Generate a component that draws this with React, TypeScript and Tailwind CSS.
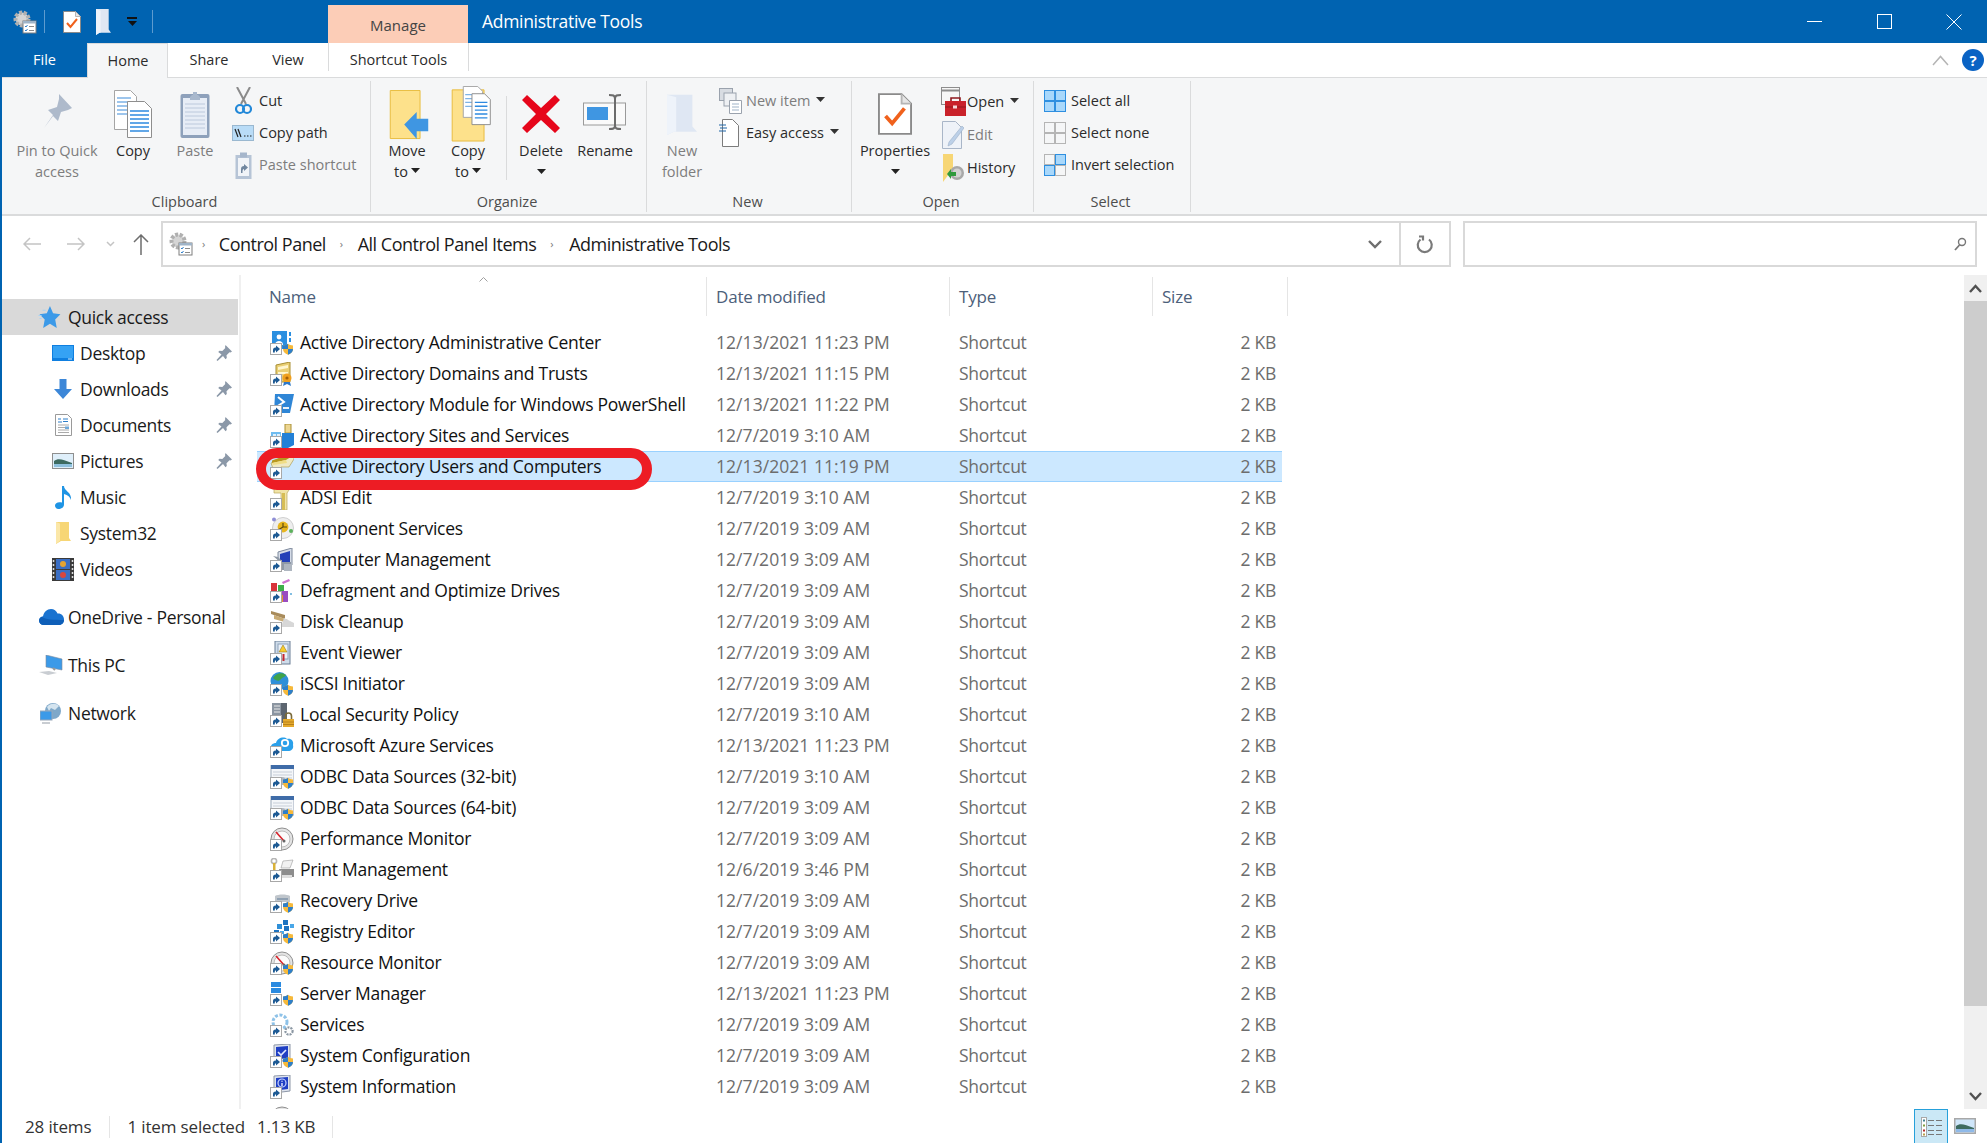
import type { ReactNode } from 'react';

// shortcut arrow badge used on every row icon
const Arrow = (
  <g>
    <rect x="0.5" y="12.5" width="11" height="11" fill="#fff" stroke="#a8a8a8" />
    <path d="M3 21.500v-2.500q0-2.500 2.500-2.500h.5v-2l4 3.500-4 3.500v-2h-.5q-.7 0-.7 1v1z" fill="#1d5a94" />
  </g>
);

const Shield = (
  <g>
    <path d="M13 14.5c2 0 3.7-.6 5-1.7 1.3 1.1 3 1.7 5 1.7v3.5c0 2.8-2 4.7-5 5.8-3-1.1-5-3-5-5.8z" fill="#f6b93b" />
    <path d="M18 12.8v5.2h-5v-3.5c2 0 3.7-.6 5-1.7zM18 18h5c0 2.8-2 4.7-5 5.8z" fill="#2e7fc9" />
  </g>
);

const Gauge = (
  <g>
    <circle cx="12" cy="12" r="11" fill="#e4e4e4" stroke="#8f8f8f" />
    <circle cx="12" cy="12" r="8" fill="#fbfbfb" stroke="#bbb" />
    <path d="M6 5l8 9" stroke="#d8222a" strokeWidth="1.6" />
    <circle cx="14" cy="14" r="1.5" fill="#666" />
  </g>
);

const Monitor = (
  <g>
    <path d="M4 1l16-1v16l-16 2z" fill="#dfe4ee" stroke="#8d97a8" />
    <path d="M6 3l12-1v12l-12 1.5z" fill="#1f3fc4" />
  </g>
);

const rowIcons: Record<string, ReactNode> = {
  adac: (
    <>
      <rect x="2" y="0" width="15" height="18" fill="#2b8fe0" />
      <circle cx="9" cy="6" r="2.4" fill="#fff" />
      <path d="M5 14c0-3 2-4 4-4s4 1 4 4z" fill="#fff" />
      <rect x="19" y="1" width="2" height="4" fill="#2b8fe0" />
      <rect x="19" y="7" width="2" height="4" fill="#2b8fe0" />
      {Shield}
    </>
  ),
  addt: (
    <>
      <path d="M6 3l14-3v20h-14z" fill="#e9cf74" stroke="#a98f35" />
      <path d="M8 5l10-2v3l-10 2zM8 10h10v2h-10z" fill="#fff6cf" />
      <circle cx="17" cy="16" r="4.5" fill="#f0a01e" />
      <circle cx="17" cy="16" r="1.6" fill="#a35f06" />
      <path d="M14 20l-1 4 4-2 4 2-1-4z" fill="#2d78c8" />
    </>
  ),
  admps: (
    <>
      <path d="M5 1h19l-4 19h-16z" fill="#2f86d6" />
      <path d="M8 4l6 5-8 5" fill="none" stroke="#fff" strokeWidth="2" />
      <path d="M13 15h6" stroke="#fff" strokeWidth="1.8" />
    </>
  ),
  adss: (
    <>
      <rect x="15" y="0" width="6" height="9" fill="#ecd591" stroke="#a98f35" />
      <path d="M1 8h10v8h-10z" fill="#6fbcf0" />
      <path d="M12 9h12v12l-6 3h-6z" fill="#2280d6" />
      <path d="M3 10h3v3h-3zM7 10h3v3h-3z" fill="#dff1fd" />
    </>
  ),
  aduc: (
    <>
      <path d="M1 8l17-8h6v4l-5 8h-8v10h-5z" fill="#efe9c4" stroke="#a8923c" strokeWidth="0.6" />
      <path d="M2 5.500l15-5.500h7l-8 5-14 3z" fill="#b8981e" />
      <path d="M2 8l14-3 1 3-14 2z" fill="#f0dd86" />
    </>
  ),
  adsi: (
    <>
      <path d="M4 1h17l-4 6v17h-6v-17h-7z" fill="#f1e4a7" stroke="#b7a75a" strokeWidth="0.7" />
      <path d="M12 7h3v17h-3z" fill="#d6bd55" />
    </>
  ),
  comp: (
    <>
      <circle cx="13" cy="11" r="10.5" fill="#eeeeee" stroke="#cfcfcf" />
      <circle cx="4" cy="2.5" r="2" fill="#8f8fd6" />
      <circle cx="21" cy="14" r="2" fill="#5bb15b" />
      <circle cx="13" cy="10" r="5.4" fill="#e7b51e" />
      <path d="M13 6v4h4M13 10l-5 3" stroke="#5b4a10" strokeWidth="1.2" fill="none" />
    </>
  ),
  cmgt: (
    <>
      <path d="M8 4l14-4v17l-14 1z" fill="#d5dce8" stroke="#7e8a9c" />
      <path d="M10 6l10-3v12l-10 1z" fill="#2340b8" />
      <path d="M3 8l5 1 3 3-2 1zM9 14h12v8h-12z" fill="#8f99a6" />
      <rect x="14" y="16" width="8" height="7" fill="#aeb6c0" />
    </>
  ),
  defrag: (
    <>
      <rect x="1" y="4" width="6" height="8" fill="#d8333a" />
      <rect x="8" y="6" width="6" height="9" fill="#3fae4a" />
      <path d="M12 3l7-3 1 2-7 3z" fill="#cf6fd0" />
      <rect x="12" y="12" width="6" height="11" fill="#9a4dc0" />
      <rect x="8" y="16" width="5" height="7" fill="#e79b2a" />
      <circle cx="21" cy="15" r="1" fill="#58a8d8" />
    </>
  ),
  disk: (
    <>
      <path d="M1 1l14 4 0 4-14-5z" fill="#a98c5c" />
      <path d="M4 5l14 5v3l-14-4z" fill="#c9ac76" />
      <path d="M14 8l10 5v4h-13z" fill="#d7d7d7" />
    </>
  ),
  event: (
    <>
      <rect x="5" y="0" width="15" height="23" fill="#cfdcea" stroke="#6b7f96" />
      <rect x="8" y="3" width="10" height="15" fill="#eaf1f8" stroke="#8da2ba" />
      <path d="M13 4l4 7h-8z" fill="#f7cb2d" stroke="#8a6c0a" strokeWidth="0.5" />
      <rect x="12.5" y="13" width="2" height="7" fill="#c6282e" />
    </>
  ),
  iscsi: (
    <>
      <circle cx="9.5" cy="9" r="9" fill="#2f8fd8" />
      <path d="M3 6c3-5 9-6 13-3-1 2-3 2-5 4-2 3-5 2-8-1z" fill="#3fa34a" />
      {Shield}
    </>
  ),
  lsp: (
    <>
      <rect x="2" y="0" width="15" height="20" fill="#8b95a1" />
      <rect x="11" y="0" width="6" height="20" fill="#5c6570" />
      <path d="M4 3h6M4 6h6M4 9h6" stroke="#e8e8e8" strokeWidth="1.2" />
      <rect x="13" y="16" width="11" height="8" fill="#e4a92c" />
      <path d="M15.5 16v-3a3 3 0 016 0v3" fill="none" stroke="#7a6a3a" strokeWidth="1.6" />
      <path d="M13 19h11M13 21.5h11" stroke="#b8811a" />
    </>
  ),
  azure: (
    <>
      <path d="M1 15c-1-4 2-6 5-6 1-5 8-7 11-4 4-1 7 2 6 6 1 4-2 6-5 6h-14c-1 0-2-1-3-2z" fill="#2aa0ea" />
      <circle cx="15" cy="9" r="3.2" fill="none" stroke="#fff" strokeWidth="1.8" />
    </>
  ),
  odbc: (
    <>
      <rect x="1" y="0" width="23" height="19" fill="#f4f6f9" stroke="#9aa7b8" />
      <rect x="1" y="0" width="23" height="4" fill="#3f6ca8" />
      <path d="M3 7h19M3 10h19M3 13h19" stroke="#c7ced8" />
      <circle cx="12" cy="16" r="4" fill="#b1b8c2" />
      {Shield}
    </>
  ),
  perf: Gauge,
  print: (
    <>
      <circle cx="4" cy="3" r="2.6" fill="none" stroke="#b6b6b6" strokeWidth="1.6" />
      <rect x="3" y="5" width="2.5" height="7" fill="#d9b23a" />
      <path d="M13 3l10-1-3 8h-9z" fill="#f1f1f1" stroke="#9a9a9a" strokeWidth="0.6" />
      <path d="M9 11h15v8h-13z" fill="#8d8d8d" />
      <path d="M12 17h10v3h-10z" fill="#dedede" />
    </>
  ),
  recov: (
    <>
      <path d="M5 7c3-2 12-2 15 0v6h-15z" fill="#c0c6cc" />
      <path d="M7 9h11v2h-11z" fill="#8fa0b2" />
      {Shield}
    </>
  ),
  regedit: (
    <>
      <rect x="13" y="0" width="5" height="5" fill="#1e73c0" />
      <rect x="7" y="4" width="5" height="5" fill="#2f8fd8" />
      <rect x="14" y="6" width="5" height="5" fill="#1e73c0" />
      <rect x="20" y="4" width="4" height="4" fill="#4aa7e8" />
      <rect x="4" y="10" width="5" height="4" fill="#1e73c0" />
      <rect x="10" y="11" width="4" height="3" fill="#4aa7e8" />
      {Shield}
    </>
  ),
  resmon: (
    <>
      {Gauge}
      {Shield}
    </>
  ),
  server: (
    <>
      <rect x="1" y="0" width="10" height="5" fill="#2a8ae0" />
      <rect x="1" y="6" width="10" height="5" fill="#2a8ae0" />
      {Shield}
    </>
  ),
  services: (
    <>
      <circle cx="10" cy="9" r="7" fill="#fff" stroke="#8ec2e8" strokeWidth="3" strokeDasharray="3 1.6" />
      <circle cx="19" cy="18" r="3.6" fill="#fff" stroke="#8b97a3" strokeWidth="2.2" strokeDasharray="2 1" />
    </>
  ),
  msconfig: (
    <>
      {Monitor}
      <path d="M8 8l3 3 5-5" stroke="#dfe8ff" strokeWidth="1.6" fill="none" />
      {Shield}
    </>
  ),
  msinfo: (
    <>
      {Monitor}
      <circle cx="12" cy="8" r="4" fill="none" stroke="#c9d4ff" strokeWidth="1.2" />
      <path d="M12 5.8v1M12 8v3" stroke="#e8edff" strokeWidth="1.4" />
    </>
  ),
  task: Gauge,
};

type FileRow = { name: string; date: string; icon: string };

const files: FileRow[] = [
  { name: 'Active Directory Administrative Center', date: '12/13/2021 11:23 PM', icon: 'adac' },
  { name: 'Active Directory Domains and Trusts', date: '12/13/2021 11:15 PM', icon: 'addt' },
  { name: 'Active Directory Module for Windows PowerShell', date: '12/13/2021 11:22 PM', icon: 'admps' },
  { name: 'Active Directory Sites and Services', date: '12/7/2019 3:10 AM', icon: 'adss' },
  { name: 'Active Directory Users and Computers', date: '12/13/2021 11:19 PM', icon: 'aduc' },
  { name: 'ADSI Edit', date: '12/7/2019 3:10 AM', icon: 'adsi' },
  { name: 'Component Services', date: '12/7/2019 3:09 AM', icon: 'comp' },
  { name: 'Computer Management', date: '12/7/2019 3:09 AM', icon: 'cmgt' },
  { name: 'Defragment and Optimize Drives', date: '12/7/2019 3:09 AM', icon: 'defrag' },
  { name: 'Disk Cleanup', date: '12/7/2019 3:09 AM', icon: 'disk' },
  { name: 'Event Viewer', date: '12/7/2019 3:09 AM', icon: 'event' },
  { name: 'iSCSI Initiator', date: '12/7/2019 3:09 AM', icon: 'iscsi' },
  { name: 'Local Security Policy', date: '12/7/2019 3:10 AM', icon: 'lsp' },
  { name: 'Microsoft Azure Services', date: '12/13/2021 11:23 PM', icon: 'azure' },
  { name: 'ODBC Data Sources (32-bit)', date: '12/7/2019 3:10 AM', icon: 'odbc' },
  { name: 'ODBC Data Sources (64-bit)', date: '12/7/2019 3:09 AM', icon: 'odbc' },
  { name: 'Performance Monitor', date: '12/7/2019 3:09 AM', icon: 'perf' },
  { name: 'Print Management', date: '12/6/2019 3:46 PM', icon: 'print' },
  { name: 'Recovery Drive', date: '12/7/2019 3:09 AM', icon: 'recov' },
  { name: 'Registry Editor', date: '12/7/2019 3:09 AM', icon: 'regedit' },
  { name: 'Resource Monitor', date: '12/7/2019 3:09 AM', icon: 'resmon' },
  { name: 'Server Manager', date: '12/13/2021 11:23 PM', icon: 'server' },
  { name: 'Services', date: '12/7/2019 3:09 AM', icon: 'services' },
  { name: 'System Configuration', date: '12/7/2019 3:09 AM', icon: 'msconfig' },
  { name: 'System Information', date: '12/7/2019 3:09 AM', icon: 'msinfo' },
];

const GearDoc = () => (
  <svg width="24" height="24" viewBox="0 0 24 24">
    <circle cx="9" cy="9" r="6.500" fill="#d5d5d5" stroke="#b0b0b0" strokeWidth="4" strokeDasharray="3 1.5" />
    <rect x="10" y="11" width="13" height="12" fill="#fff" stroke="#7f7f7f" />
    <rect x="10" y="11" width="13" height="2.5" fill="#9fb4c8" />
    <path d="M12 16l1 1 1.5-2M12 20l1 1 1.5-2" stroke="#2f7fc9" fill="none" />
    <path d="M16 16.5h5M16 20.5h5" stroke="#8a8a8a" />
  </svg>
);

const PropsDoc = ({ w = 18, h = 22 }: { w?: number; h?: number }) => (
  <svg width={w} height={h} viewBox="0 0 18 22">
    <path d="M.5.5h12l5 5v16h-17z" fill="#fff" stroke="#8a8a8a" />
    <path d="M12.5.5v5h5" fill="#e6e6e6" stroke="#b5b5b5" />
    <path d="M4 12l3.5 4 6.5-8" stroke="#f0611c" strokeWidth="2" fill="none" />
  </svg>
);

const FadedFolder = ({ w = 15, h = 27 }: { w?: number; h?: number }) => (
  <svg width={w} height={h} viewBox="0 0 26 50" preserveAspectRatio="none">
    <path d="M0 2h22v38l4 6h-20l-6 4z" fill="#dfe7f3" />
    <path d="M0 2l8 3v41l-2 0-6 4z" fill="#eef3fa" />
  </svg>
);

const PinLarge = () => (
  <svg width="31" height="38" viewBox="0 0 31 38" className="mb-[4px]">
    <path d="M17 1l13 14-4 2-7 2-3 9-5-5-9 12 9-13-5-5 9-3 2-8z" fill="#aebacb" />
  </svg>
);

const CopyDocs = () => (
  <svg width="38" height="48" viewBox="0 0 38 48">
    <path d="M.5.5h16l6 6v33h-22z" fill="#fff" stroke="#a5a5a5" />
    <path d="M3 8h14M3 12h14M3 16h14M3 20h14M3 24h14" stroke="#7eb3e6" strokeWidth="1.5" />
    <path d="M13.5 11.5h17l7 7v29h-24z" fill="#fff" stroke="#8e8e8e" />
    <path d="M16 21h19M16 25h19M16 29h19M16 33h19M16 37h19M16 41h19" stroke="#2f8ae0" strokeWidth="1.5" />
  </svg>
);

const Clipboard = () => (
  <svg width="30" height="48" viewBox="0 0 30 48">
    <rect x="0.5" y="4" width="29" height="44" rx="2" fill="#8ea1bb" />
    <rect x="3" y="8" width="24" height="37" fill="#e7edf6" />
    <path d="M5 14h20M5 18h20M5 22h20M5 26h20M5 30h20M5 34h20M5 38h20" stroke="#bcc9dc" />
    <path d="M10 7l2-2h1v-3h4v3h1l2 2v3h-10z" fill="#a8b8cd" />
  </svg>
);

const Scissors = () => (
  <svg width="17" height="28" viewBox="0 0 17 28">
    <path d="M2 0l9 17M15 0l-9 17" stroke="#8b8b8b" strokeWidth="2" />
    <circle cx="5" cy="22" r="4" fill="none" stroke="#2288d8" strokeWidth="2.2" />
    <circle cx="12" cy="22" r="4" fill="none" stroke="#2288d8" strokeWidth="2.2" />
  </svg>
);

const CopyPathIcon = () => (
  <svg width="22" height="16" viewBox="0 0 22 16">
    <rect x="0.5" y="0.5" width="21" height="15" fill="#b9dcf7" stroke="#9ab8d0" />
    <path d="M3 4l3 8M6 4l3 8" stroke="#222" strokeWidth="1.2" />
    <path d="M12 11h1.5M15 11h1.5M18 11h1.5" stroke="#222" strokeWidth="1.2" />
  </svg>
);

const PasteShortcutIcon = () => (
  <svg width="17" height="27" viewBox="0 0 17 27">
    <rect x="0.5" y="3" width="16" height="24" fill="#b6c4d6" />
    <rect x="3" y="6" width="11" height="18" fill="#f1f4f8" />
    <rect x="5" y="0.5" width="7" height="5" fill="#a6b6cb" />
    <path d="M6 21v-4c0-2 1-3 3-3v-2l4 3.500-4 3.500v-2c-1 0-1.500 1-1.500 2.500v1.500z" fill="#70869f" />
  </svg>
);

const MoveToIcon = () => (
  <svg width="40" height="50" viewBox="0 0 40 52" className="ml-[4px] mt-[2px]">
    <path d="M.5.5h31v50h-31z" fill="#fde18b" stroke="#e8bb3c" />
    <path d="M15 36l13-13v7h12v13h-12v8z" fill="#3f96e2" />
  </svg>
);

const CopyToIcon = () => (
  <svg width="44" height="56" viewBox="0 0 40 58" className="ml-[6px]">
    <path d="M.5 4h33v53h-33z" fill="#fde18b" stroke="#e8bb3c" />
    <path d="M12 .5h15l5 5v27h-20z" fill="#fff" stroke="#a5a5a5" />
    <path d="M14 9h15M14 13h15M14 17h15M14 21h15" stroke="#7eb3e6" strokeWidth="1.3" />
    <path d="M21 8h13l6 6v26h-19z" fill="#fff" stroke="#8e8e8e" />
    <path d="M24 17h13M24 21h13M24 25h13M24 29h13M24 33h13" stroke="#2f8ae0" strokeWidth="1.4" />
  </svg>
);

const DeleteIcon = () => (
  <svg width="38" height="38" viewBox="0 0 38 38">
    <path d="M5 0l14 13 14-13 5 5-14 14 14 14-5 5-14-13-14 13-5-5 14-14-14-14z" fill="#e6061b" />
  </svg>
);

const RenameIcon = () => (
  <svg width="44" height="44" viewBox="0 0 44 40" className="mb-[2px]">
    <rect x="0.5" y="10" width="42" height="22" fill="#fafafa" stroke="#9a9a9a" />
    <rect x="4" y="14" width="21" height="13" fill="#3f96e2" />
    <path d="M26 2c4 0 6 0 6 4v26c0 4 2 4 6 4M38 2c-4 0-6 0-6 4M32 32c0 4-2 4-6 4" fill="none" stroke="#6c6c6c" strokeWidth="2" />
  </svg>
);

const NewItemIcon = () => (
  <svg width="23" height="26" viewBox="0 0 23 26">
    <rect x="0.5" y="0.5" width="13" height="12" fill="#d8dce2" stroke="#9aa2ad" />
    <rect x="5" y="5" width="12" height="13" fill="#eef0f3" stroke="#9aa2ad" />
    <path d="M10.500 12.500h12v13h-12z" fill="#fff" stroke="#9aa2ad" />
    <path d="M13 16h7M13 19h7M13 22h7" stroke="#9fb3c8" />
  </svg>
);

const EasyAccessIcon = () => (
  <svg width="20" height="28" viewBox="0 0 20 28">
    <path d="M3.500.500h10l6 6v21h-16z" fill="#fff" stroke="#7c7c7c" />
    <path d="M0 6h7M1 9h7M0 12h7" stroke="#2067a8" strokeWidth="1.2" />
  </svg>
);

const ToolboxIcon = () => (
  <svg width="25" height="30" viewBox="0 0 25 30">
    <rect x="0.5" y="0.500" width="18" height="17" fill="#f7f7f7" stroke="#8d8d8d" />
    <path d="M1 3.500h17" stroke="#8d8d8d" strokeWidth="2" />
    <rect x="4" y="14" width="21" height="15" fill="#c9222a" />
    <path d="M10 14v-3h9v3" fill="none" stroke="#8f1a1f" strokeWidth="1.6" />
    <path d="M4 20h21" stroke="#8f1a1f" />
    <rect x="12" y="18.500" width="4" height="3" fill="#f5d9d9" />
  </svg>
);

const EditIcon = () => (
  <svg width="22" height="28" viewBox="0 0 22 28">
    <path d="M.5.500h13l6 6v21h-19z" fill="#eef2f8" stroke="#a9b6c8" />
    <path d="M20 5l2 2-12 16-4 2 1-4z" fill="#bcd0e8" stroke="#9cb0c8" strokeWidth="0.6" />
  </svg>
);

const HistoryIcon = () => (
  <svg width="21" height="29" viewBox="0 0 21 29">
    <path d="M0 1h10v20h-4l-6 8z" fill="#f7d675" />
    <circle cx="14" cy="20" r="7" fill="#a8a8a8" />
    <circle cx="14" cy="20" r="4.500" fill="#d2d2d2" />
    <path d="M4 21l4-5v3h5v4h-5v3z" fill="#2f9a3d" />
  </svg>
);

const Grid = ({ on }: { on: boolean[] }) => (
  <svg width="22" height="22" viewBox="0 0 22 22">
    {on.map((v, i) => (
      <rect
        key={i}
        x={i % 2 === 0 ? 0.5 : 11.5}
        y={i < 2 ? 0.5 : 11.5}
        width="10"
        height="10"
        fill={v ? '#a9d8fb' : '#f5f6f7'}
        stroke={v ? '#2e8fe0' : '#b5b5b5'}
      />
    ))}
  </svg>
);

const Caret = ({ className = '' }: { className?: string }) => (
  <svg width="9" height="5" viewBox="0 0 9 5" className={className}>
    <path d="M0 0h9l-4.500 5z" fill="currentColor" />
  </svg>
);

const SmallPin = () => (
  <svg width="16" height="16" viewBox="0 0 16 16">
    <path d="M9.500 0l6.500 6.500-1.500 1-1-.3-3 3 .3 2.800-1.300 1.300-2.500-3.300-5.500 5-1-1 5-5.500-3.300-2.500 1.300-1.300 2.800.3 3-3-.3-1z" fill="#8b98a8" />
  </svg>
);

function BigButton({
  width,
  icon,
  lines,
  caret,
  muted,
  twoRowCaret,
}: {
  width: string;
  icon: ReactNode;
  lines: string[];
  caret?: boolean;
  muted?: boolean;
  twoRowCaret?: boolean;
}) {
  return (
    <div className={`flex flex-col items-center pt-[4px] text-[14.5px] leading-[21px] ${width} ${muted ? 'text-[#7d7d7d]' : 'text-[#2b2b2b]'}`}>
      <div className="flex h-[52px] items-center justify-center">{icon}</div>
      {lines.map((line, i) => (
        <div key={line} className="flex items-center gap-[3px] whitespace-nowrap">
          {line}
          {caret && i === lines.length - 1 && !twoRowCaret && <Caret className="mb-[3px] text-[#222]" />}
        </div>
      ))}
      {twoRowCaret && <Caret className="mt-[8px] text-[#222]" />}
    </div>
  );
}

function SmallButton({
  icon,
  label,
  muted,
  caret,
  iconBox,
  height = 'h-[32px]',
}: {
  icon: ReactNode;
  label: string;
  muted?: boolean;
  caret?: boolean;
  iconBox: string;
  height?: string;
}) {
  return (
    <div className={`flex items-center whitespace-nowrap text-[14.5px] ${height} ${muted ? 'text-[#7d7d7d]' : 'text-[#2b2b2b]'}`}>
      <div className={`flex shrink-0 items-center ${iconBox}`}>{icon}</div>
      {label}
      {caret && <Caret className="ml-[6px] mb-[3px] text-[#333]" />}
    </div>
  );
}

function RibbonGroup({ width, label, pad, children }: { width: string; label: string; pad: string; children: ReactNode }) {
  return (
    <div className={`flex h-[131px] shrink-0 flex-col border-r border-[#dadbdc] pt-[3px] ${width}`}>
      <div className={`flex h-[104px] shrink-0 ${pad}`}>{children}</div>
      <div className="flex h-[24px] shrink-0 items-end justify-center pr-[3px] text-[14.5px] leading-[21px] text-[#4d4d4d]">{label}</div>
    </div>
  );
}

const sideIcons: Record<string, ReactNode> = {
  star: (
    <svg width="26" height="23" viewBox="3 0 24 22">
      <path d="M14 0l3 7 7 1-5 5 1.500 8-6.500-4-6.500 4 1.500-8-5-5 7-1z" fill="#3c9ae8" />
      <path d="M3 9h3M4 12h2M7 4h3" stroke="#a9d3f4" />
    </svg>
  ),
  desktop: (
    <svg width="22" height="16" viewBox="0 0 22 16">
      <rect width="22" height="16" fill="#0f7fe0" />
      <rect x="1" y="1" width="20" height="12" fill="#35a2f4" />
      <rect x="16" y="13.500" width="4" height="1" fill="#cfe9fc" />
    </svg>
  ),
  download: (
    <svg width="18" height="20" viewBox="0 0 18 20">
      <path d="M5.500 0h7v10h5.500l-9 10-9-10h5.500z" fill="#3c87d8" />
    </svg>
  ),
  docs: (
    <svg width="17" height="22" viewBox="0 0 17 22">
      <path d="M.5.500h12l4 4v17h-16z" fill="#fff" stroke="#9a9a9a" />
      <path d="M3 5h3M8 5h5M8 7.500h5M3 8h4" stroke="#2f7fc9" />
      <path d="M3 11h11M3 13.500h7M3 16h11M3 18.500h11" stroke="#aaa" />
      <rect x="10" y="12.500" width="4" height="2.500" fill="#6fa8d8" />
    </svg>
  ),
  pics: (
    <svg width="22" height="16" viewBox="0 0 22 16">
      <rect x="0.500" y="0.500" width="21" height="15" fill="#dfeffa" stroke="#8f8f8f" />
      <path d="M2 8c4-3 8-2 18 2v4h-18z" fill="#3d6b61" />
      <path d="M2 11h18v3h-18z" fill="#8fc1de" />
    </svg>
  ),
  music: (
    <svg width="17" height="23" viewBox="0 0 17 23">
      <path d="M7 0h2c0 5 8 6 7 14-1-3-3-5-7-6v10.500c0 3-3 4.500-5.500 4.500s-3.500-2-3.500-3.500c0-2.500 3-4 7-3z" fill="#1f94e4" />
    </svg>
  ),
  folder: (
    <svg width="15" height="22" viewBox="0 0 15 22">
      <path d="M0 0h13v16l2 3h-10l-5 3z" fill="#f7d675" />
      <path d="M0 0l4 1.500v17l-4 3.500z" fill="#fbe7a8" />
    </svg>
  ),
  film: (
    <svg width="22" height="23" viewBox="0 0 22 23">
      <rect width="22" height="23" fill="#3a3a3a" />
      <rect x="4" y="1" width="14" height="10" fill="#3a6ec4" />
      <rect x="4" y="12" width="14" height="10" fill="#3a6ec4" />
      <circle cx="11" cy="6" r="3" fill="#e5a332" />
      <circle cx="11" cy="17" r="3" fill="#d8473f" />
      <path d="M1.500 2v19M20.500 2v19" stroke="#ddd" strokeWidth="1.500" strokeDasharray="2 2" />
    </svg>
  ),
  cloud: (
    <svg width="25" height="16" viewBox="0 0 25 16">
      <path d="M5 16c-3 0-5-2-5-4.500s2-4 4-4.200c1-4.300 4-7.300 8-7.300 3 0 5.500 1.800 6.500 4.500 4-.3 6.500 2.500 6.500 6 0 3.200-2 5.500-5 5.500z" fill="#1a73d0" />
      <path d="M5 16c-3 0-5-2-5-4.500 0-1.500 1-3 3-3.800 3 3 12 3 22 3.300 0 2.500-2 5-5 5z" fill="#0f5fb8" />
    </svg>
  ),
  pc: (
    <svg width="24" height="20" viewBox="0 0 24 20">
      <path d="M7 0l16 4v11l-16-3z" fill="#3c9ae8" stroke="#7e8a9c" strokeWidth="0.6" />
      <path d="M14 13l2 2" stroke="#999" strokeWidth="2" />
      <path d="M0 17l10-1 8 2-9 2z" fill="#c9cdd2" />
    </svg>
  ),
  network: (
    <svg width="22" height="21" viewBox="0 0 22 21">
      <circle cx="13" cy="8" r="8" fill="#7fa8c9" />
      <path d="M7 4c3-4 9-4 12-1l-4 4-4-2-2 3z" fill="#d4e4ef" />
      <rect x="0" y="8" width="12" height="9" fill="#3c9ae8" stroke="#9aa7b8" />
      <path d="M2 19h8v2h-8z" fill="#c9cdd2" />
    </svg>
  ),
};

function NavRow({ icon, label, pin, indent, active }: { icon: string; label: string; pin?: boolean; indent?: boolean; active?: boolean }) {
  return (
    <div className={`flex h-[36px] items-center ${active ? 'bg-[#d9d9d9]' : ''} ${indent ? 'pl-[47px]' : 'pl-[35px]'}`}>
      <div className="mr-[3px] flex w-[28px] shrink-0 items-center justify-center">{sideIcons[icon]}</div>
      <span className="whitespace-nowrap text-[17.500px] tracking-[-0.3px] text-[#1a1a1a]">{label}</span>
      {pin && (
        <div className="ml-auto mr-[6px] flex">
          <SmallPin />
        </div>
      )}
    </div>
  );
}

export default function App() {
  return (
    <div className="flex h-[1143px] w-[1987px] flex-col overflow-hidden border-l-2 border-[#0063b1] bg-white font-['Open_Sans',sans-serif]">
      {/* Title bar */}
      <div className="flex h-[43px] shrink-0 items-start bg-[#0063b1]">
        <div className="flex h-[43px] w-[326px] items-center pl-[11px]">
          <GearDoc />
          <div className="ml-[7px] h-[23px] w-[1px] bg-[#5d9bcf]" />
          <div className="ml-[18px]">
            <PropsDoc />
          </div>
          <div className="ml-[15px]">
            <FadedFolder />
          </div>
          <div className="ml-[16px] flex flex-col items-center gap-[2px]">
            <div className="h-[2px] w-[10px] bg-[#111]" />
            <Caret className="text-[#111]" />
          </div>
          <div className="ml-[15px] h-[23px] w-[1px] bg-[#5d9bcf]" />
        </div>
        <div className="mt-[5px] flex h-[38px] w-[140px] items-center justify-center bg-[#fccdb7] pt-[2px] text-[15px] text-[#444]">Manage</div>
        <div className="ml-[14px] flex h-[43px] items-center text-[17.500px] tracking-[-0.3px] text-white">Administrative Tools</div>
        <div className="ml-auto flex h-[43px]">
          <div className="flex w-[70px] items-center justify-center">
            <div className="h-[1px] w-[15px] bg-white" />
          </div>
          <div className="flex w-[72px] items-center justify-center pr-[2px]">
            <div className="h-[15px] w-[15px] border border-white" />
          </div>
          <div className="flex w-[66px] items-center justify-center">
            <svg width="16" height="16" viewBox="0 0 16 16">
              <path d="M.5.500l15 15M15.500.500l-15 15" stroke="#fff" fill="none" />
            </svg>
          </div>
        </div>
      </div>

      {/* Tabs */}
      <div className="flex h-[35px] shrink-0 items-stretch border-b border-[#dadbdc] text-[14.500px] text-[#2b2b2b]">
        <div className="flex w-[85px] items-center justify-center bg-[#0063b1] text-white">File</div>
        <div className="relative z-10 -mb-[1px] flex w-[81px] items-center justify-center border-x border-t border-[#dadbdc] bg-[#f5f6f7] pl-[1px]">Home</div>
        <div className="flex w-[82px] items-center justify-center">Share</div>
        <div className="flex w-[78px] items-center justify-center pr-[2px]">View</div>
        <div className="mb-[6px] flex w-[141px] items-center justify-center border-x border-[#dadbdc] pt-[5px]">Shortcut Tools</div>
        <div className="ml-auto flex items-center gap-[13px] pr-[3px]">
          <svg width="17" height="11" viewBox="0 0 17 11">
            <path d="M1 10l7.500-8.500 7.500 8.500" stroke="#b5b5b5" strokeWidth="1.500" fill="none" />
          </svg>
          <div className="flex h-[22px] w-[22px] items-center justify-center rounded-full bg-[#0a63c4] text-[15px] font-bold leading-none text-white">?</div>
        </div>
      </div>

      {/* Ribbon */}
      <div className="flex h-[138px] shrink-0 border-b-2 border-[#dadbdc] bg-[#f5f6f7] pt-[3px]">
        <RibbonGroup width="w-[369px]" label="Clipboard" pad="pl-[10px]">
          <BigButton width="w-[90px]" icon={<PinLarge />} lines={['Pin to Quick', 'access']} muted />
          <BigButton width="w-[62px]" icon={<CopyDocs />} lines={['Copy']} />
          <BigButton width="w-[62px]" icon={<Clipboard />} lines={['Paste']} muted />
          <div className="ml-[6px] flex flex-col pt-[1px]">
            <SmallButton iconBox="w-[27px] pr-[5px] justify-center" icon={<Scissors />} label="Cut" />
            <SmallButton iconBox="w-[27px] pr-[5px] justify-center" icon={<CopyPathIcon />} label="Copy path" />
            <SmallButton iconBox="w-[27px] pr-[5px] justify-center" icon={<PasteShortcutIcon />} label="Paste shortcut" muted />
          </div>
        </RibbonGroup>
        <RibbonGroup width="w-[276px]" label="Organize" pad="pl-[5px]">
          <BigButton width="w-[62px]" icon={<MoveToIcon />} lines={['Move', 'to']} caret />
          <BigButton width="w-[60px]" icon={<CopyToIcon />} lines={['Copy', 'to']} caret />
          <div className="ml-[8px] mt-[12px] h-[84px] w-[1px] bg-[#dadbdc]" />
          <BigButton width="w-[68px]" icon={<DeleteIcon />} lines={['Delete']} caret twoRowCaret />
          <BigButton width="w-[60px]" icon={<RenameIcon />} lines={['Rename']} />
        </RibbonGroup>
        <RibbonGroup width="w-[205px]" label="New" pad="pl-[4px]">
          <BigButton width="w-[62px]" icon={<FadedFolder w={30} h={42} />} lines={['New', 'folder']} muted />
          <div className="ml-[6px] flex flex-col pt-[1px]">
            <SmallButton iconBox="w-[27px] justify-start" icon={<NewItemIcon />} label="New item" caret muted />
            <SmallButton iconBox="w-[27px] justify-start" icon={<EasyAccessIcon />} label="Easy access" caret />
          </div>
        </RibbonGroup>
        <RibbonGroup width="w-[182px]" label="Open" pad="pl-[3px]">
          <BigButton width="w-[80px]" icon={<PropsDoc w={34} h={42} />} lines={['Properties']} caret twoRowCaret />
          <div className="ml-[4px] flex flex-col pt-[1px]">
            <SmallButton height="h-[33px]" iconBox="w-[28px] justify-center" icon={<ToolboxIcon />} label="Open" caret />
            <SmallButton height="h-[33px]" iconBox="w-[28px] justify-center" icon={<EditIcon />} label="Edit" muted />
            <SmallButton height="h-[33px]" iconBox="w-[28px] justify-center" icon={<HistoryIcon />} label="History" />
          </div>
        </RibbonGroup>
        <RibbonGroup width="w-[157px]" label="Select" pad="pl-[10px]">
          <div className="flex flex-col pt-[1px]">
            <SmallButton iconBox="w-[27px] justify-start" icon={<Grid on={[true, true, true, true]} />} label="Select all" />
            <SmallButton iconBox="w-[27px] justify-start" icon={<Grid on={[false, false, false, false]} />} label="Select none" />
            <SmallButton iconBox="w-[27px] justify-start" icon={<Grid on={[false, true, true, false]} />} label="Invert selection" />
          </div>
        </RibbonGroup>
      </div>

      {/* Address bar */}
      <div className="flex h-[56px] shrink-0 items-start pr-[8px] pt-[5px]">
        <div className="flex h-[46px] w-[159px] items-center text-[#c4c4c4]">
          <svg width="18" height="14" viewBox="0 0 18 14" className="ml-[21px]">
            <path d="M7 1l-6 6 6 6M1 7h17" stroke="currentColor" strokeWidth="1.500" fill="none" />
          </svg>
          <svg width="18" height="14" viewBox="0 0 18 14" className="ml-[26px]">
            <path d="M11 1l6 6-6 6M17 7h-17" stroke="currentColor" strokeWidth="1.500" fill="none" />
          </svg>
          <svg width="9" height="6" viewBox="0 0 9 6" className="ml-[21px]">
            <path d="M1 1l3.500 3.500 3.500-3.500" stroke="currentColor" strokeWidth="1.500" fill="none" />
          </svg>
          <svg width="16" height="21" viewBox="0 0 16 21" className="ml-[18px] text-[#6e6e6e]">
            <path d="M1 8l7-7 7 7M8 1v20" stroke="currentColor" strokeWidth="1.500" fill="none" />
          </svg>
        </div>
        <div className="flex h-[46px] w-[1290px] items-center border-2 border-[#d9d9d9] text-[18px] tracking-[-0.5px] text-[#1a1a1a]">
          <div className="flex w-[36px] justify-center">
            <GearDoc />
          </div>
          <span className="ml-[3px] text-[11px] text-[#777]">›</span>
          <span className="ml-[14px]">Control Panel</span>
          <span className="ml-[14px] text-[11px] text-[#777]">›</span>
          <span className="ml-[15px]">All Control Panel Items</span>
          <span className="ml-[14px] text-[11px] text-[#777]">›</span>
          <span className="ml-[16px]">Administrative Tools</span>
          <div className="ml-auto flex h-full items-center">
            <svg width="14" height="9" viewBox="0 0 14 9" className="mr-[17px]">
              <path d="M1 1l6 6 6-6" stroke="#6e6e6e" strokeWidth="2.400" fill="none" />
            </svg>
            <div className="flex h-full w-[50px] items-center justify-center border-l-2 border-[#d9d9d9]">
              <svg width="18" height="19" viewBox="0 0 18 19">
                <path d="M13 4.500a7 7 0 1 1-8.500 0M3 1.500h4v4" stroke="#7a7a7a" strokeWidth="2.200" fill="none" />
              </svg>
            </div>
          </div>
        </div>
        <div className="ml-[12px] flex h-[46px] w-[514px] items-center justify-end border-2 border-[#d9d9d9] pr-[8px]">
          <svg width="13" height="14" viewBox="0 0 13 14">
            <circle cx="8" cy="5" r="3.500" stroke="#777" strokeWidth="1.400" fill="none" />
            <path d="M5.500 8l-4.500 5" stroke="#777" strokeWidth="1.800" />
          </svg>
        </div>
      </div>

      {/* Main */}
      <div className="flex min-h-0 flex-1">
        {/* Navigation pane */}
        <div className="w-[236px] shrink-0 pt-[27px]">
          <NavRow icon="star" label="Quick access" active />
          <NavRow icon="desktop" label="Desktop" pin indent />
          <NavRow icon="download" label="Downloads" pin indent />
          <NavRow icon="docs" label="Documents" pin indent />
          <NavRow icon="pics" label="Pictures" pin indent />
          <NavRow icon="music" label="Music" indent />
          <NavRow icon="folder" label="System32" indent />
          <NavRow icon="film" label="Videos" indent />
          <div className="mt-[12px]">
            <NavRow icon="cloud" label="OneDrive - Personal" />
          </div>
          <div className="mt-[12px]">
            <NavRow icon="pc" label="This PC" />
          </div>
          <div className="mt-[12px]">
            <NavRow icon="network" label="Network" />
          </div>
        </div>
        <div className="mt-[3px] ml-[1px] w-[2px] shrink-0 bg-[#f0f0f0]" />

        {/* File list */}
        <div className="flex min-w-0 flex-1 flex-col overflow-hidden pt-[3px]">
          <div className="flex h-[41px] shrink-0 pt-[2px] text-[17px] tracking-[-0.2px] text-[#4c607a]">
            <div className="relative flex w-[466px] items-center border-r border-[#e5e5e5] pl-[28px]">
              Name
              <svg width="9" height="5" viewBox="0 0 9 5" className="absolute left-[238px] top-0">
                <path d="M.5 4.500l4-4 4 4" stroke="#a0a0a0" fill="none" />
              </svg>
            </div>
            <div className="flex w-[243px] items-center border-r border-[#e5e5e5] pl-[9px]">Date modified</div>
            <div className="flex w-[203px] items-center border-r border-[#e5e5e5] pl-[9px]">Type</div>
            <div className="flex w-[135px] items-center border-r border-[#e5e5e5] pl-[9px]">Size</div>
          </div>
          <div className="relative ml-[16px] mt-[11px] w-[1025px]">
            {files.map((f) => {
              const selected = f.name === 'Active Directory Users and Computers';
              return (
                <div
                  key={f.name}
                  className={`flex h-[31px] items-center border-y text-[17.500px] tracking-[-0.25px] ${selected ? 'border-[#99d1ff] bg-[#cce8ff]' : 'border-transparent'}`}
                >
                  <div className="flex w-[459px] shrink-0 items-center pl-[13px] text-[#111]">
                    <svg width="24" height="24" viewBox="0 0 24 24" className="mr-[6px] shrink-0">
                      {rowIcons[f.icon]}
                      {Arrow}
                    </svg>
                    <span className="whitespace-nowrap">{f.name}</span>
                  </div>
                  <div className="w-[243px] shrink-0 tracking-[0.05px] text-[#6d6d6d]">{f.date}</div>
                  <div className="w-[202px] shrink-0 text-[#6d6d6d]">Shortcut</div>
                  <div className="w-[115px] shrink-0 text-right text-[#6d6d6d]">2 KB</div>
                </div>
              );
            })}
            {/* next row, only the top of its icon shows above the status bar */}
            <div className="flex h-[31px] items-center pl-[13px]">
              <svg width="24" height="24" viewBox="0 0 24 24">
                {rowIcons.task}
              </svg>
            </div>
            {/* red callout around the selected row */}
            <div className="pointer-events-none absolute left-[-1px] top-[121px] h-[42px] w-[396px] rounded-[21px] border-[10px] border-[#ed1c24]" />
          </div>
        </div>

        {/* Scrollbar */}
        <div className="mt-[3px] flex w-[23px] shrink-0 flex-col bg-[#f0f0f0]">
          <div className="flex h-[26px] items-center justify-center">
            <svg width="13" height="9" viewBox="0 0 13 9">
              <path d="M1 8l5.500-6 5.500 6" stroke="#505050" strokeWidth="2.400" fill="none" />
            </svg>
          </div>
          <div className="h-[705px] bg-[#cdcdcd]" />
          <div className="mt-auto flex h-[26px] items-center justify-center">
            <svg width="13" height="9" viewBox="0 0 13 9">
              <path d="M1 1l5.500 6 5.500-6" stroke="#505050" strokeWidth="2.400" fill="none" />
            </svg>
          </div>
        </div>
      </div>

      {/* Status bar */}
      <div className="flex h-[34px] shrink-0 items-center pt-[2px] text-[17px] tracking-[-0.15px] text-[#333]">
        <span className="ml-[23px]">28 items</span>
        <div className="ml-[18px] h-[22px] w-[1px] bg-[#e5e5e5]" />
        <span className="ml-[17px]">1 item selected</span>
        <span className="ml-[12px]">1.13 KB</span>
        <div className="ml-[17px] h-[22px] w-[1px] bg-[#e5e5e5]" />
        <div className="-mt-[2px] ml-auto flex h-full items-center">
          <div className="flex h-[34px] w-[34px] items-center justify-center border-x border-t border-[#26a0da] bg-[#cbe8f6]">
            <svg width="21" height="20" viewBox="0 0 21 20">
              <rect x="0.500" y="0.500" width="5" height="19" fill="#fff" stroke="#a8a8a8" />
              <rect x="2" y="2.500" width="2" height="2" fill="#3f7f8f" />
              <rect x="2" y="7.500" width="2" height="2" fill="#7f9f3f" />
              <rect x="2" y="12.500" width="2" height="2" fill="#b02a2a" />
              <rect x="2" y="16.500" width="2" height="2" fill="#b5a04a" />
              <path d="M7 3.500h6M15 3.500h6M7 8.500h6M15 8.500h6M7 13.500h6M15 13.500h6M7 17.500h6M15 17.500h6" stroke="#777" />
            </svg>
          </div>
          <div className="ml-[6px] mr-[11px]">
            <svg width="22" height="16" viewBox="0 0 22 16">
              <rect x="0.750" y="0.750" width="20.500" height="14.500" fill="#cfe6fa" stroke="#a8a8a8" strokeWidth="1.500" />
              <path d="M2 8c4-3 8-2 18 2v4h-18z" fill="#3d6b61" />
              <path d="M2 11h18v3h-18z" fill="#8fb9e8" />
            </svg>
          </div>
        </div>
      </div>
    </div>
  );
}
